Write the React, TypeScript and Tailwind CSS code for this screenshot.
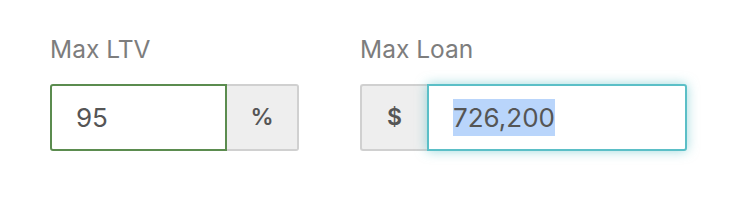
import React from "react";

const font = { fontFamily: "Inter, 'Open Sans', sans-serif" };

function Field({
  label,
  children,
  width,
}: {
  label: string;
  children: React.ReactNode;
  width: string;
}) {
  return (
    <div className={`flex flex-col ${width}`}>
      <div className="mb-[21px] text-[24.5px] leading-[28px] text-[#7d7d7d]">{label}</div>
      <div className="flex h-[67px]">{children}</div>
    </div>
  );
}

export default function App() {
  return (
    <div className="h-[216px] w-[742px] bg-white pl-[50px] pt-[35px]" style={font}>
      <div className="flex gap-[61px]">
        <Field label="Max LTV" width="w-[249px]">
          <div className="flex flex-1 items-center rounded-l-[3px] border-2 border-[#5b8c4f] bg-white pl-[24px] text-[26px] text-[#555555]">
            95
          </div>
          <div className="flex w-[72px] items-center justify-center rounded-r-[3px] border-2 border-l-0 border-[#d0d0d0] bg-[#eeeeee] text-[23px] font-semibold text-[#555555]">
            %
          </div>
        </Field>
        <Field label="Max Loan" width="w-[327px]">
          <div className="flex w-[67px] items-center justify-center rounded-l-[3px] border-2 border-r-0 border-[#d0d0d0] bg-[#eeeeee] text-[23px] font-semibold text-[#555555]">
            $
          </div>
          <div className="flex flex-1 items-center rounded-r-[3px] border-2 border-[#5bbfc7] bg-white pl-[24px] text-[26px] text-[#555555] shadow-[0_0_12px_rgba(91,191,199,0.6)]">
            <span className="bg-[#b9d5fb] leading-[37px]">726,200</span>
          </div>
        </Field>
      </div>
    </div>
  );
}
